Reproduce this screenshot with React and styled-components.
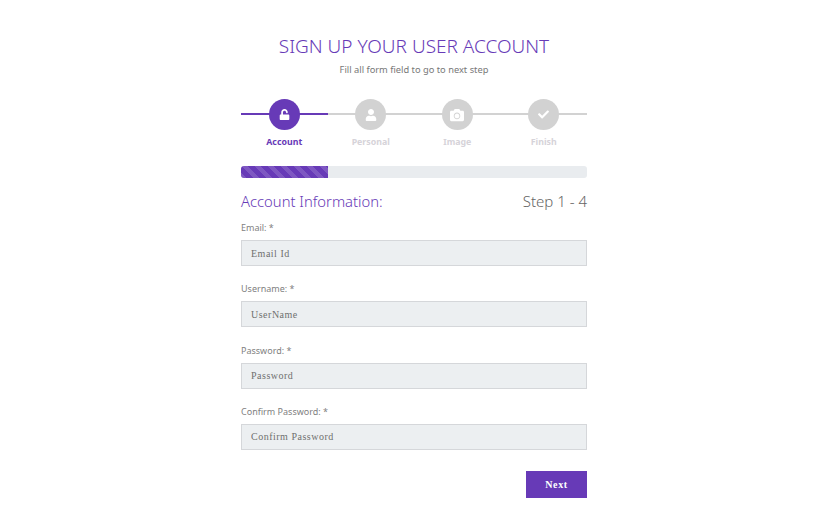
import React from "react";
import styled, { createGlobalStyle } from "styled-components";
import { FaUnlock, FaUser, FaCamera, FaCheck } from "react-icons/fa";

const Global = createGlobalStyle`
  html, body { margin: 0; padding: 0; background: #fff; }
  * { box-sizing: border-box; }
`;
const Page = styled.div`
  width: 346px; margin: 0 auto; padding-top: 35px;
  font-family: "Noto Sans", "Open Sans", sans-serif;
`;
const Title = styled.h2`
  margin: 0; text-align: center; font-size: 19px; line-height: 23px; font-weight: 300; color: #673ab7; white-space: nowrap;
`;
const Subtitle = styled.p`
  margin: 5px 0 0; text-align: center; font-size: 9.3px; line-height: 14px; color: #777;
`;
const Steps = styled.ol`
  list-style: none; margin: 22px 0 0; padding: 0; display: grid; grid-template-columns: repeat(4, 1fr);
`;
const Step = styled.li`
  position: relative; display: flex; flex-direction: column; align-items: center;
  font-size: 8.8px; line-height: 12px; font-weight: 700; color: ${p => p.$active ? "#673ab7" : "#d6d3d9"};
  &::before {
    content: ""; position: absolute; left: 0; right: 0; top: 14px; height: 1.5px;
    background: ${p => p.$active ? "#673ab7" : "#d2d2d2"};
  }
`;
const Circle = styled.span`
  position: relative; width: 31px; height: 31px; border-radius: 50%; display: flex; align-items: center; justify-content: center;
  background: ${p => p.$active ? "#673ab7" : "#d2d2d2"}; color: #fff; font-size: ${p => p.$size}px; margin-bottom: 6px;
`;
const Bar = styled.div`
  margin-top: 18px; height: 12px; border-radius: 3px; background: #e9ecef; overflow: hidden;
`;
const Fill = styled.div`
  height: 100%;
  background-color: #673ab7;
  background-image: linear-gradient(45deg, rgba(255,255,255,.15) 25%, transparent 25%, transparent 50%, rgba(255,255,255,.15) 50%, rgba(255,255,255,.15) 75%, transparent 75%, transparent);
  background-size: 13px 13px;
`;
const Head = styled.div`
  margin-top: 13px; display: flex; justify-content: space-between; align-items: center; height: 20px;
`;
const Heading = styled.h3`
  margin: 0; font-size: 14.8px; font-weight: 300; color: #673ab7;
`;
const StepCount = styled.span`
  font-size: 15px; font-weight: 300; color: #666;
`;
const Form = styled.form`
  display: flex; flex-direction: column; margin-top: 10px;
`;
const Field = styled.label`
  display: flex; flex-direction: column; margin-bottom: 16.33px;
`;
const LabelText = styled.span`
  font-size: 9px; line-height: 13px; color: #7f7f7f; margin-bottom: 6px;
`;
const Input = styled.input`
  width: 100%; height: 26px; padding: 0 9px; border: 1px solid #d5d7da; background: #eceff1; border-radius: 0;
  font-family: "Liberation Serif", serif; font-size: 10px; letter-spacing: .5px; color: #555; outline: none;
  &::placeholder { color: #6f6f6f; opacity: 1; }
`;
const Actions = styled.div`
  display: flex; justify-content: flex-end; margin-top: 4.67px;
`;
const Next = styled.button`
  width: 61px; height: 27px; border: 0; background: #673ab7; color: #fff; padding: 0;
  font-family: "Liberation Serif", serif; font-size: 10px; font-weight: 700; letter-spacing: .6px;
`;

const steps = [
  ["Account", FaUnlock, 11], ["Personal", FaUser, 12], ["Image", FaCamera, 14], ["Finish", FaCheck, 11],
];
const fields = [
  ["Email: *", "Email Id", "email"], ["Username: *", "UserName", "text"],
  ["Password: *", "Password", "password"], ["Confirm Password: *", "Confirm Password", "password"],
];

export default function App() {
  return (
    <Page>
      <Global />
      <Title>SIGN UP YOUR USER ACCOUNT</Title>
      <Subtitle>Fill all form field to go to next step</Subtitle>
      <Steps>
        {steps.map(([name, Icon, size], i) => (
          <Step key={name} $active={i === 0}>
            <Circle $active={i === 0} $size={size}><Icon /></Circle>
            {name}
          </Step>
        ))}
      </Steps>
      <Bar><Fill style={{ width: `${100 / 4}%` }} /></Bar>
      <Head>
        <Heading>Account Information:</Heading>
        <StepCount>Step 1 - 4</StepCount>
      </Head>
      <Form>
        {fields.map(([label, ph, type]) => (
          <Field key={label}>
            <LabelText>{label}</LabelText>
            <Input type={type} placeholder={ph} />
          </Field>
        ))}
        <Actions><Next type="button">Next</Next></Actions>
      </Form>
    </Page>
  );
}
